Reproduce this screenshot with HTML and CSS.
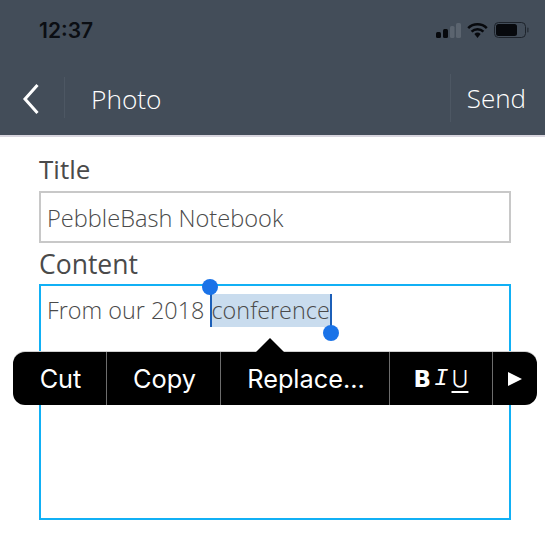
FILE: index.html
```html
<!DOCTYPE html>
<html lang="en">
<head>
    <meta charset="UTF-8">
    <meta name="viewport" content="width=device-width, initial-scale=1.0">
    <title>Photo</title>
    <link rel="stylesheet" href="styles.css">
</head>
<body>
    <header class="top-bar">
        <div class="status-bar">
            <span class="clock">12:37</span>
            <div class="status-icons">
                <svg class="signal" width="25" height="15" viewBox="0 0 25 15">
                    <rect x="0" y="9" width="5" height="6" rx="1.5" fill="#07090d"/>
                    <rect x="7" y="6" width="5" height="9" rx="1.5" fill="#07090d"/>
                    <rect x="14" y="3" width="4.500" height="12" rx="1.5" fill="#5b646f"/>
                    <rect x="20" y="0" width="5" height="15" rx="1.5" fill="#5b646f"/>
                </svg>
                <svg class="wifi" width="21" height="15" viewBox="0 0 21 15">
                    <path d="M1.2 5.2a13.200 13.200 0 0 1 18.600 0M4.600 8.600a8.400 8.400 0 0 1 11.800 0" fill="none" stroke="#07090d" stroke-width="2.500"/>
                    <path d="M7.400 11a4.500 4.500 0 0 1 6.200 0l-3.100 4z" fill="#07090d"/>
                </svg>
                <svg class="battery" width="35" height="16" viewBox="0 0 35 16">
                    <rect x="0.500" y="0.500" width="31" height="15" rx="4" fill="none" stroke="#1d232b"/>
                    <rect x="2" y="2" width="21" height="12" rx="2.500" fill="#07090d"/>
                    <rect x="33" y="5.500" width="1.600" height="5" rx="0.800" fill="#2a313a"/>
                </svg>
            </div>
        </div>
        <nav class="nav-bar">
            <a href="#" class="back-btn">
                <svg width="18" height="32" viewBox="0 0 18 32">
                    <path d="M15.500 2 3 16l12.500 14" fill="none" stroke="#fff" stroke-width="3"/>
                </svg>
            </a>
            <span class="nav-title">Photo</span>
            <a href="#" class="send-btn">Send</a>
        </nav>
    </header>

    <main class="form-area">
        <label class="field-label">Title</label>
        <div class="title-box">PebbleBash Notebook</div>
        <label class="field-label content-label">Content</label>
        <div class="content-box">
            From our 2018 <span class="selected">conference<i class="handle handle-start"></i><i class="handle handle-end"></i></span>
        </div>
    </main>

    <div class="edit-menu">
        <span class="menu-arrow"></span>
        <span class="menu-item item-cut">Cut</span>
        <span class="menu-item item-copy">Copy</span>
        <span class="menu-item item-replace">Replace...</span>
        <span class="menu-item item-format"><b>B</b><em>I</em><u>U</u></span>
        <span class="menu-item item-more"><span class="more-arrow"></span></span>
    </div>
</body>
</html>
```

FILE: styles.css
```css
body {
    margin: 0;
    width: 545px;
    height: 536px;
    overflow: hidden;
    background-color: #fff;
    font-family: "Open Sans", sans-serif;
    color: #4a4a4a;
}

.top-bar {
    height: 135px;
    background-color: #434d59;
    border-bottom: 2px solid #d8d5de;
}

.status-bar {
    height: 60px;
    display: flex;
    justify-content: space-between;
    align-items: center;
    padding: 0 16px 0 39px;
}

.clock {
    font-family: Inter, sans-serif;
    font-size: 21px;
    font-weight: 600;
    color: #0b0e13;
}

.status-icons {
    display: flex;
    align-items: center;
    gap: 6px;
}

.nav-bar {
    height: 75px;
    display: flex;
    align-items: center;
}

.nav-bar a {
    color: #fff;
    text-decoration: none;
}

.back-btn {
    width: 65px;
    height: 41px;
    box-sizing: border-box;
    padding: 6px 0 0 22px;
    border-right: 1px solid #4d5763;
}

.nav-title {
    margin-left: 26px;
    flex: 1;
    padding-top: 2px;
    font-size: 26.300px;
    font-weight: 300;
    color: #fff;
}

.send-btn {
    height: 48px;
    line-height: 48px;
    padding: 0 19px 0 16px;
    border-left: 1px solid #4d5763;
    font-size: 26px;
    font-weight: 300;
}

.form-area {
    padding: 16px 34px 0 39px;
}

.field-label {
    display: block;
    height: 38px;
    line-height: 33px;
    font-size: 26px;
}

.title-box {
    height: 52px;
    box-sizing: border-box;
    border: 2px solid #c8c8c8;
    padding-left: 6px;
    line-height: 50px;
    font-size: 23.600px;
    font-weight: 300;
}

.content-label {
    margin-top: 3px;
    line-height: 37px;
    font-size: 26.500px;
}

.content-box {
    height: 236px;
    box-sizing: border-box;
    border: 2px solid #11b0f5;
    padding: 4px 6px 0;
    line-height: 40px;
    font-size: 23.400px;
    font-weight: 300;
}

.selected {
    position: relative;
    display: inline-block;
    margin-left: 1px;
    height: 33px;
    line-height: 33px;
    background-color: #c9dcee;
    box-shadow: -2px 0 0 #1c5fb8, 2px 0 0 #1c5fb8;
}

.handle {
    position: absolute;
    width: 16px;
    height: 16px;
    border-radius: 50%;
    background-color: #1a73e8;
}

.handle-start {
    left: -10px;
    top: -15px;
}

.handle-end {
    right: -9px;
    top: 31px;
}

.edit-menu {
    position: absolute;
    left: 13px;
    top: 352px;
    width: 524px;
    height: 53px;
    display: flex;
    background-color: #000;
    border-radius: 12px;
    box-shadow: 0 -1px 0 #d0d0d0;
    font-family: Inter, sans-serif;
    font-size: 25.300px;
    color: #fff;
}

.menu-arrow {
    position: absolute;
    left: 243px;
    top: -14px;
    border-left: 14px solid transparent;
    border-right: 14px solid transparent;
    border-bottom: 14px solid #000;
}

.menu-item {
    display: flex;
    justify-content: center;
    align-items: center;
    box-sizing: border-box;
    border-left: 1px solid #6d6d6d;
}

.item-cut {
    width: 93px;
    border-left: none;
    padding-left: 2px;
}

.item-copy {
    width: 114px;
    padding-left: 2px;
}

.item-replace {
    width: 169px;
    padding-left: 2px;
}

.item-format {
    width: 103px;
    font-size: 23px;
    gap: 4px;
}

.item-format b {
    font-family: "DejaVu Sans", sans-serif;
    font-weight: 700;
}

.item-format em {
    font-family: "Liberation Mono", monospace;
    font-size: 24px;
    font-weight: 400;
    margin: 0 -1px;
}

.item-format u {
    font-weight: 300;
    text-underline-offset: 4px;
}

.item-more {
    flex: 1;
}

.more-arrow {
    border-left: 14px solid #fff;
    border-top: 7.500px solid transparent;
    border-bottom: 7.500px solid transparent;
}
```
